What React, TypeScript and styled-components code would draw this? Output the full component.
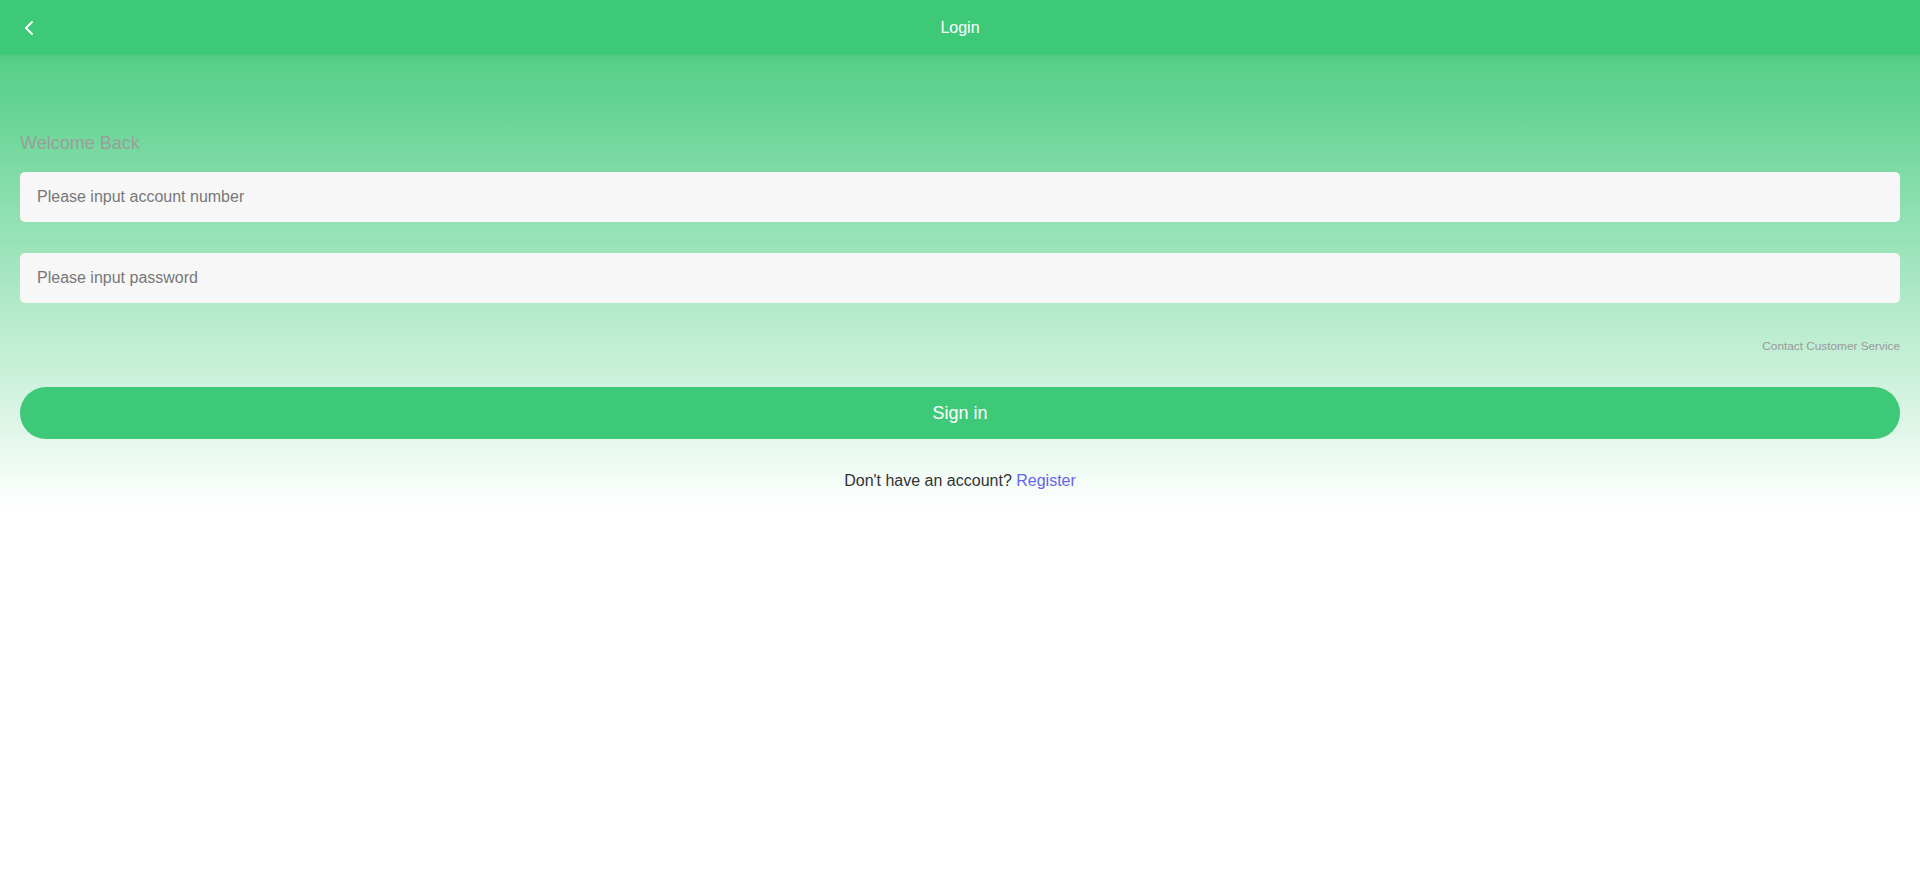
import { createGlobalStyle } from 'styled-components';
import styled from 'styled-components';

const GlobalStyle = createGlobalStyle`
  body {
    margin: 0;
    font-family: "Liberation Sans", Arial, sans-serif;
    background: #ffffff;
  }
`;

const Page = styled.div`
  width: 100%;
  min-height: 510px;
  background: linear-gradient(to bottom, #3ec978 0px, #ffffff 510px);
`;

const Header = styled.header`
  height: 55px;
  background-color: #3ec978;
  box-shadow: 0 1px 4px rgba(0, 0, 0, 0.06);
  display: flex;
  align-items: center;
  justify-content: center;
  position: relative;
`;

const BackButton = styled.button`
  position: absolute;
  left: 18px;
  top: 50%;
  transform: translateY(-50%);
  width: 22px;
  height: 22px;
  padding: 0;
  border: none;
  background: transparent;
  display: flex;
  align-items: center;
  justify-content: center;
  cursor: pointer;
`;

const Title = styled.h1`
  margin: 0;
  font-size: 16px;
  font-weight: 400;
  color: #ffffff;
`;

const Content = styled.main`
  padding: 78px 20px 32px;
  display: flex;
  flex-direction: column;
`;

const Welcome = styled.h2`
  margin: 0 0 18px;
  font-size: 18px;
  font-weight: 400;
  line-height: 21px;
  color: #9a9f9b;
`;

const Input = styled.input<{ $gap: number }>`
  box-sizing: border-box;
  width: 100%;
  height: 50px;
  padding: 0 17px;
  margin-bottom: ${(p) => p.$gap}px;
  border: none;
  border-radius: 5px;
  background: #f7f7f7;
  font-family: inherit;
  font-size: 16px;
  color: #333;
  outline: none;

  &::placeholder {
    color: #777;
  }
`;

const ServiceRow = styled.div`
  display: flex;
  justify-content: flex-end;
  margin-bottom: 34px;
`;

const ServiceLink = styled.a`
  font-size: 11.8px;
  line-height: 14px;
  color: #999;
  text-decoration: none;
  cursor: pointer;
`;

const SignInButton = styled.button`
  width: 100%;
  height: 52px;
  border: none;
  border-radius: 26px;
  background: #3ec978;
  color: #ffffff;
  font-family: inherit;
  font-size: 18px;
  cursor: pointer;
`;

const RegisterLine = styled.p`
  margin: 33px 0 0;
  text-align: center;
  font-size: 16px;
  line-height: 18px;
  color: #333;
`;

const RegisterLink = styled.a`
  color: #6565e8;
  text-decoration: none;
  cursor: pointer;
`;

function App() {
  return (
    <Page>
      <GlobalStyle />
      <Header>
        <BackButton aria-label="back">
          <svg width="10" height="16" viewBox="0 0 10 16">
            <polyline
              points="8,2 2,8 8,14"
              fill="none"
              stroke="#ffffff"
              strokeWidth="2"
              strokeLinecap="round"
              strokeLinejoin="round"
            />
          </svg>
        </BackButton>
        <Title>Login</Title>
      </Header>
      <Content>
        <Welcome>Welcome Back</Welcome>
        <Input $gap={31} placeholder="Please input account number" />
        <Input $gap={36} type="password" placeholder="Please input password" />
        <ServiceRow>
          <ServiceLink>Contact Customer Service</ServiceLink>
        </ServiceRow>
        <SignInButton>Sign in</SignInButton>
        <RegisterLine>
          Don't have an account? <RegisterLink>Register</RegisterLink>
        </RegisterLine>
      </Content>
    </Page>
  );
}

export default App;
